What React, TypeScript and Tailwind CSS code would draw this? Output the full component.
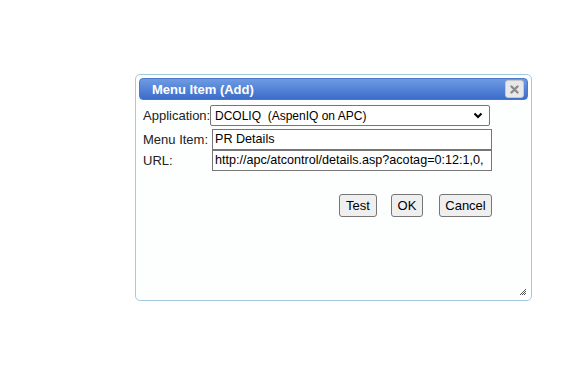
import React from "react";

const font = { fontFamily: '"Liberation Sans", Arial, sans-serif' };

export default function App() {
  return (
    <div className="w-[584px] h-[368px] bg-white pl-[135px] pt-[74px]" style={font}>
      <div className="relative w-[397px] h-[227px] border border-[#a6c9e2] rounded-[5px] bg-[#fdfefe] p-[3px]">
        {/* title bar */}
        <div className="flex items-center justify-between h-[22px] rounded-[4px] border border-[#4a78cc] bg-gradient-to-b from-[#6e9be2] to-[#3c6ccb] pl-[12px] pr-[3px]">
          <span className="text-[13px] font-bold text-white leading-none">Menu Item (Add)</span>
          <button className="w-[19px] h-[18px] rounded-[3px] border border-[#c8c8c8] bg-[#e8e8e8] flex items-center justify-center">
            <svg width="9" height="9" viewBox="0 0 9 9">
              <path d="M1.5 1.5 L7.5 7.5 M7.5 1.5 L1.5 7.5" stroke="#8a8a8a" strokeWidth="2.4" strokeLinecap="round" />
            </svg>
          </button>
        </div>

        {/* form */}
        <div className="pl-[4px] pt-[5px] text-[13px] text-[#222]">
          <div className="flex items-center h-[21px]">
            <span className="w-[67px]">Application:</span>
            <div className="relative w-[280px] h-[21px] border border-[#767676] rounded-[2px] bg-white flex items-center pl-[4px] text-black text-[12px]">
              <span className="whitespace-pre">DCOLIQ  (AspenIQ on APC)</span>
              <svg className="absolute right-[6px] top-[6px]" width="10" height="7" viewBox="0 0 10 7">
                <path d="M1.5 1.5 L5 5 L8.5 1.5" stroke="#000" strokeWidth="2" fill="none" />
              </svg>
            </div>
          </div>
          <div className="flex items-center h-[21px] mt-[3px]">
            <span className="w-[69px]">Menu Item:</span>
            <div className="w-[280px] h-[21px] border border-[#767676] bg-white flex items-center pl-[2px] text-black text-[12.6px]">
              PR Details
            </div>
          </div>
          <div className="flex items-center h-[21px]">
            <span className="w-[69px]">URL:</span>
            <div className="w-[280px] h-[21px] border border-[#767676] bg-white flex items-center pl-[2px] text-black text-[12.6px] overflow-hidden whitespace-nowrap">
              http://apc/atcontrol/details.asp?acotag=0:12:1,0,
            </div>
          </div>

          <div className="flex justify-end w-[349px] mt-[23px] gap-[14px]">
            <button className="h-[23px] w-[38px] border border-[#767676] rounded-[3px] bg-[#efefef] text-[13px] text-black">Test</button>
            <button className="h-[23px] w-[32px] border border-[#767676] rounded-[3px] bg-[#efefef] text-[13px] text-black">OK</button>
            <button className="h-[23px] w-[53px] ml-[2px] border border-[#767676] rounded-[3px] bg-[#efefef] text-[13px] text-black">Cancel</button>
          </div>
        </div>

        {/* resize grip */}
        <svg className="absolute right-[4px] bottom-[4px]" width="8" height="8" viewBox="0 0 8 8">
          <path d="M7 1 L1 7 M7 3 L3 7 M7 5 L5 7" stroke="#555" strokeWidth="1" />
        </svg>
      </div>
    </div>
  );
}
